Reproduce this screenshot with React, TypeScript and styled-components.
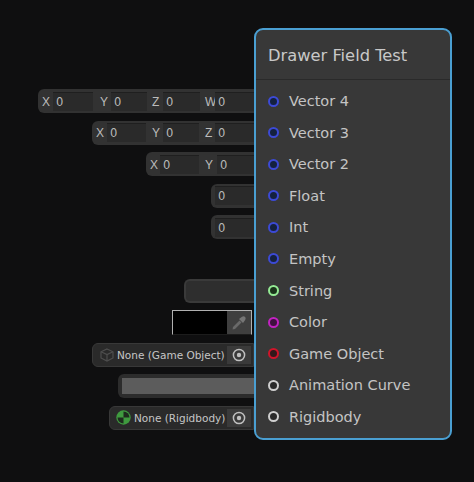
import React, { FC } from 'react';
import styled, { createGlobalStyle } from 'styled-components';

const GlobalStyle = createGlobalStyle`
	html, body {
		margin: 0;
		background: #0f0f10;
	}
`;

const Stage = styled.div`
	position: relative;
	width: 474px;
	height: 482px;
	overflow: hidden;
	background: #0f0f10;
	font-family: "DejaVu Sans", sans-serif;
	color: #c4c4c4;
`;

const Fields = styled.div`
	display: flex;
	flex-direction: column;
	align-items: flex-end;
	gap: 7.6px;
	box-sizing: border-box;
	width: 254px;
	padding-top: 89px;
`;

const Row = styled.div<{ $width: number }>`
	display: flex;
	align-items: center;
	box-sizing: border-box;
	flex: none;
	width: ${p => p.$width}px;
	height: 24px;
	border-radius: 6px 0 0 6px;
	background: #323232;
`;

const VectorRow = styled(Row)`
	padding-left: 4px;
`;

const Axis = styled.span<{ $width: number }>`
	flex: none;
	width: ${p => p.$width}px;
	padding-top: 1px;
	font-family: "Liberation Sans", sans-serif;
	font-size: 12px;
	color: #bcbcbc;
`;

const NumberInput = styled.div<{ $width: number; $gap?: number }>`
	flex: none;
	box-sizing: border-box;
	width: ${p => p.$width}px;
	height: 19px;
	margin-right: ${p => p.$gap || 0}px;
	padding-left: 3px;
	border-top: 1px solid #1f1f1f;
	background: #2a2a2a;
	font-family: "DejaVu Sans", sans-serif;
	font-size: 11.5px;
	line-height: 18px;
	color: #b8b8b8;
`;

const EmptyRow = styled.div`
	flex: none;
	height: 24px;
`;

const TextRow = styled(Row)`
	border: 2px solid #3a3a3a;
	border-right: none;
	background: #2e2e2e;
`;

const ColorRow = styled.div`
	display: flex;
	flex: none;
	box-sizing: border-box;
	width: 80px;
	height: 25px;
	margin-right: 2px;
	border: 1px solid #b0b0b0;
	border-bottom-color: #1c1c1c;
	background: #000;
`;

const Swatch = styled.div`
	flex: 1;
	background: #000;
`;

const PickerButton = styled.div`
	display: flex;
	align-items: center;
	justify-content: center;
	flex: none;
	width: 24px;
	background: #3f3f3f;
`;

const ObjectRow = styled(Row)<{ $inset: number }>`
	gap: 3px;
	padding: 2px 2px 2px ${p => p.$inset}px;
	border: 1px solid #383838;
	background: #2a2a2a;

	svg {
		flex: none;
	}
`;

const ObjectLabel = styled.span`
	flex: 1;
	min-width: 0;
	font-family: "DejaVu Sans", sans-serif;
	font-size: 10.5px;
	white-space: nowrap;
	color: #c6c6c6;
`;

const Target = styled(PickerButton)`
	align-self: stretch;
	background: #3a3a3a;
`;

const SliderRow = styled(Row)`
	padding: 4px 0 4px 4px;
	background: #2c2c2c;
`;

const SliderFill = styled.div`
	flex: 1;
	align-self: stretch;
	background: #5c5c5c;
`;

const Panel = styled.div`
	position: absolute;
	left: 254px;
	top: 28px;
	box-sizing: border-box;
	width: 198px;
	height: 412px;
	border: 2px solid #4a9fd2;
	border-radius: 9px;
	background: #383838;
`;

const PanelHeader = styled.div`
	display: flex;
	align-items: center;
	box-sizing: border-box;
	height: 50px;
	padding: 1px 0 0 12px;
	border-bottom: 1px solid #2a2a2a;
	font-size: 16.3px;
	color: #c8c8c8;
`;

const PanelList = styled.div`
	display: flex;
	flex-direction: column;
	gap: 7.6px;
	padding-top: 9px;
`;

const Port = styled.div`
	display: flex;
	align-items: center;
	gap: 10px;
	height: 24px;
	padding-left: 12px;
	font-size: 14.5px;
	color: #c4c4c4;
`;

const Dot = styled.span<{ $ring: string; $core: string }>`
	flex: none;
	box-sizing: border-box;
	width: 11px;
	height: 11px;
	border: 2px solid ${p => p.$ring};
	border-radius: 50%;
	background: ${p => p.$core};
`;

const CubeIcon: FC = () => (
	<svg width="14" height="14" viewBox="0 0 14 14" fill="none" stroke="#4e4e4e" strokeWidth="1.2">
		<path d="M7 1 L13 3.8 V10 L7 13 L1 10 V3.8 Z" />
		<path d="M1 3.8 L7 6.6 L13 3.8 M7 6.6 V13" />
	</svg>
);

const RigidbodyIcon: FC = () => (
	<svg width="15" height="15" viewBox="0 0 15 15">
		<circle cx="7.5" cy="7.5" r="7.2" fill="#3f9a3f" />
		<path d="M7.5 7.5 V1.5 A6 6 0 0 1 13.5 7.5 Z" fill="#1e2b1e" />
		<path d="M7.5 7.5 V13.5 A6 6 0 0 1 1.5 7.5 Z" fill="#1e2b1e" />
	</svg>
);

const TargetIcon: FC = () => (
	<svg width="14" height="14" viewBox="0 0 14 14">
		<circle cx="7" cy="7" r="5.6" fill="none" stroke="#c0c0c0" strokeWidth="1.5" />
		<circle cx="7" cy="7" r="2.2" fill="#c0c0c0" />
	</svg>
);

const DropperIcon: FC = () => (
	<svg width="16" height="16" viewBox="0 0 16 16" fill="#696969">
		<path d="M1.5 14.5 L2 12 L8.5 5.5 L10.5 7.5 L4 14 Z" />
		<path d="M8 4 L11 1.8 Q12.8 0.8 14.1 2 Q15.2 3.2 14.2 5 L12 8 Z" fill="#767676" />
	</svg>
);

const ports = [
	{ name: 'Vector 4', ring: '#3c4ad6', core: '#14213f' },
	{ name: 'Vector 3', ring: '#3c4ad6', core: '#14213f' },
	{ name: 'Vector 2', ring: '#3c4ad6', core: '#14213f' },
	{ name: 'Float', ring: '#3c4ad6', core: '#14213f' },
	{ name: 'Int', ring: '#3c4ad6', core: '#14213f' },
	{ name: 'Empty', ring: '#3c4ad6', core: '#14213f' },
	{ name: 'String', ring: '#94ea94', core: '#1a331a' },
	{ name: 'Color', ring: '#c222c2', core: '#3f103f' },
	{ name: 'Game Object', ring: '#d0142a', core: '#33181a' },
	{ name: 'Animation Curve', ring: '#cfcfcf', core: '#2a2a2a' },
	{ name: 'Rigidbody', ring: '#cfcfcf', core: '#2a2a2a' },
];

const App: FC = () => (
	<Stage>
		<GlobalStyle />
		<Fields>
			<VectorRow $width={216}>
				<Axis $width={11}>X</Axis>
				<NumberInput $width={40} $gap={7}>0</NumberInput>
				<Axis $width={11}>Y</Axis>
				<NumberInput $width={36} $gap={5}>0</NumberInput>
				<Axis $width={11}>Z</Axis>
				<NumberInput $width={37} $gap={5}>0</NumberInput>
				<Axis $width={10}>W</Axis>
				<NumberInput $width={39}>0</NumberInput>
			</VectorRow>
			<VectorRow $width={162}>
				<Axis $width={11}>X</Axis>
				<NumberInput $width={39} $gap={6}>0</NumberInput>
				<Axis $width={11}>Y</Axis>
				<NumberInput $width={36} $gap={6}>0</NumberInput>
				<Axis $width={10}>Z</Axis>
				<NumberInput $width={39}>0</NumberInput>
			</VectorRow>
			<VectorRow $width={108}>
				<Axis $width={10}>X</Axis>
				<NumberInput $width={39} $gap={6}>0</NumberInput>
				<Axis $width={12}>Y</Axis>
				<NumberInput $width={37}>0</NumberInput>
			</VectorRow>
			<VectorRow $width={43}>
				<NumberInput $width={39}>0</NumberInput>
			</VectorRow>
			<VectorRow $width={43}>
				<NumberInput $width={39}>0</NumberInput>
			</VectorRow>
			<EmptyRow />
			<TextRow $width={70} />
			<ColorRow>
				<Swatch />
				<PickerButton>
					<DropperIcon />
				</PickerButton>
			</ColorRow>
			<ObjectRow $width={162} $inset={7}>
				<CubeIcon />
				<ObjectLabel>None (Game Object)</ObjectLabel>
				<Target>
					<TargetIcon />
				</Target>
			</ObjectRow>
			<SliderRow $width={136}>
				<SliderFill />
			</SliderRow>
			<ObjectRow $width={145} $inset={6}>
				<RigidbodyIcon />
				<ObjectLabel>None (Rigidbody)</ObjectLabel>
				<Target>
					<TargetIcon />
				</Target>
			</ObjectRow>
		</Fields>
		<Panel>
			<PanelHeader>Drawer Field Test</PanelHeader>
			<PanelList>
				{ports.map(port => (
					<Port key={port.name}>
						<Dot $ring={port.ring} $core={port.core} />
						{port.name}
					</Port>
				))}
			</PanelList>
		</Panel>
	</Stage>
);

export default App;
